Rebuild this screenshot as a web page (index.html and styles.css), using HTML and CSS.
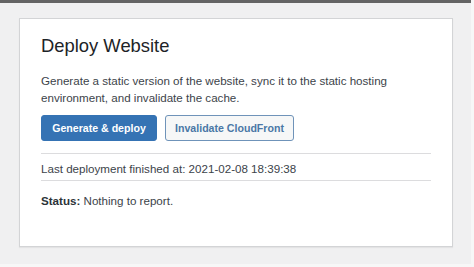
FILE: index.html
```html
<!DOCTYPE html>
<html lang="en">
<head>
    <meta charset="UTF-8">
    <meta name="viewport" content="width=device-width, initial-scale=1.0">
    <title>Deploy Website</title>
    <link rel="stylesheet" href="styles.css">
</head>
<body>

    <div class="page">
        <div class="topbar"></div>

        <section class="card">
            <h2 class="card-title">Deploy Website</h2>
            <p class="card-desc">Generate a static version of the website, sync it to the static hosting environment, and invalidate the cache.</p>

            <div class="actions">
                <button type="button" class="btn btn-primary">Generate &amp; deploy</button>
                <button type="button" class="btn btn-secondary">Invalidate CloudFront</button>
            </div>

            <div class="info-row">Last deployment finished at: 2021-02-08 18:39:38</div>
            <div class="status-row"><strong>Status:</strong> Nothing to report.</div>
        </section>
    </div>

</body>
</html>
```

FILE: styles.css
```css
html, body {
    margin: 0;
    background-color: #f7f7f7;
}

body {
    font-family: 'Liberation Sans', Arial, sans-serif;
    font-size: 11.6px;
    color: #3c434a;
}

/* Page area (screenshot leaves a thin lighter strip right and bottom) */
.page {
    width: 471px;
    height: 264px;
    background-color: #f0f0f1;
    overflow: hidden;
}

.topbar {
    height: 3px;
    background-color: #646464;
}

/* Card */
.card {
    box-sizing: border-box;
    width: 434px;
    height: 229px;
    margin: 15px 0 0 19px;
    padding: 15px 21px 0;
    background-color: #fff;
    border: 1px solid #d3d4d6;
    box-shadow: 0 1px 1px rgba(0, 0, 0, 0.05);
}

.card-title {
    margin: 0;
    font-size: 18.4px;
    font-weight: normal;
    line-height: 24px;
    color: #1d2327;
}

.card-desc {
    margin: 14px 0 0;
    line-height: 17px;
}

/* Buttons */
.actions {
    display: flex;
    gap: 8px;
    margin-top: 9px;
    padding-bottom: 12px;
    border-bottom: 1px solid #dcdcde;
}

.btn {
    box-sizing: border-box;
    height: 26px;
    padding: 0;
    border-radius: 3px;
    font-family: 'Liberation Sans', Arial, sans-serif;
    font-size: 10.6px;
    font-weight: bold;
    text-align: center;
    white-space: nowrap;
    cursor: pointer;
}

.btn-primary {
    width: 116px;
    background-color: #3573b4;
    border: 1px solid #3573b4;
    color: #fff;
}

.btn-secondary {
    width: 129px;
    background-color: #f6f7f7;
    border: 1px solid #6f93b9;
    color: #4a77a6;
}

/* Info rows */
.info-row {
    padding: 6px 0 3px;
    line-height: 17px;
    border-bottom: 1px solid #dcdcde;
}

.status-row {
    padding-top: 11px;
    line-height: 17px;
}

.status-row strong {
    color: #2c3338;
}
```
